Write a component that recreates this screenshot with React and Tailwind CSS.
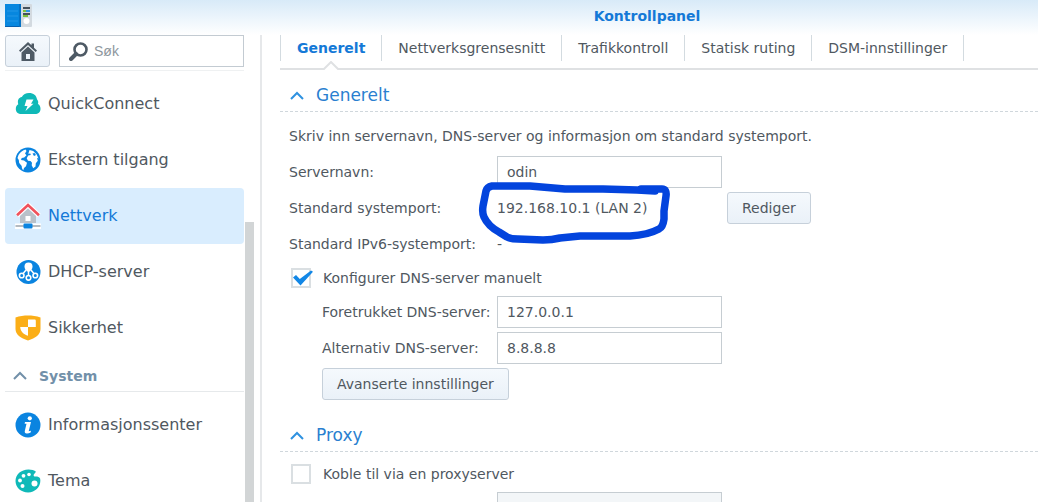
import { useState } from "react";

function CloudIcon() {
  return (
    <svg className="size-[26px] shrink-0" viewBox="0 0 26 26">
      <path d="M6.500 23C3 23 .8 21 .8 18c0-2.400 1-3.900 2.500-4.700C2.200 9.500 3.500 6.500 6.800 5.900 8.300 3.400 10.800 2 14 2c4.500 0 7.500 2.300 8 6.300 1.300 1.500 1.500 3.200 1 4.700 1.700.8 2.500 2.700 2.500 4.700 0 3.300-2.200 5.300-5.500 5.300z" fill="#0fb9b8" />
      <path d="M11.500 8.500h7l-2.500 4.200h2.500L10.500 20l2-5H9.500z" fill="#fff" />
    </svg>
  );
}

function GlobeIcon() {
  return (
    <svg className="size-[26px] shrink-0" viewBox="0 0 26 26">
      <circle cx="13" cy="13" r="12.500" fill="#0a84e0" />
      <path d="M3.500 8c1.800-3 4.200-4.800 7-5.500l1 1.500-1.500 2.500 1.500 1.700-2.300 2.300-2.500.5-.7 2 3 .5 3 2.200-1 3.500-2 1.800-.7 2.200c-1-1-1.500-2-1.600-4.200L4.200 16l-.4-3L2.500 11z" fill="#fff" />
      <path d="M14.500 3l3.700 1 3.500 3.500 1.800 4-1.500-.7.8 3-2 2.500-.3 3.200-2.300 1.700-1.500-3 .3-2.500-1.500-1.700-2.500-.3-1.300-2.500 1.500-2.700 2.600-.6-.5-1.500-2 .3.500-1.500z" fill="#fff" />
      <path d="M17.500 6.500l2-.5 1.500 2-2 1z" fill="#0a84e0" />
    </svg>
  );
}

function NetworkIcon() {
  return (
    <svg className="size-[26px] shrink-0" viewBox="0 0 26 26">
      <path d="M2 12.500L13 2l11 10.500" fill="none" stroke="#fff" strokeWidth="5" />
      <path d="M5 20v-7l8-7.500 8 7.500v7z" fill="#b9c1c9" />
      <path d="M2 12.200L13 2l11 10.200" fill="none" stroke="#f0525c" strokeWidth="2.600" />
      <rect x="10.500" y="13" width="5" height="5" fill="#fff" />
      <rect x="0" y="20.500" width="26" height="5.500" fill="#fff" />
      <rect x="0.500" y="22" width="25" height="2" fill="#b3bac1" />
      <rect x="8.500" y="20.500" width="9" height="5" rx="1" fill="#0a84e0" />
    </svg>
  );
}

function DhcpIcon() {
  return (
    <svg className="size-[26px] shrink-0" viewBox="0 0 26 26">
      <circle cx="13.500" cy="13" r="12" fill="#0a84e0" />
      <path d="M13.500 8L6.500 16.500M13.500 8v11M13.500 8l7 8.500" stroke="#fff" strokeWidth="1.500" />
      <path d="M11 8h5l-.8 4.500h-3.400z" fill="#fff" />
      <circle cx="13.500" cy="7.500" r="4" fill="#fff" />
      <g fill="#0a84e0" stroke="#fff" strokeWidth="1.600">
        <circle cx="6.700" cy="16.500" r="2.300" />
        <circle cx="20.300" cy="16.500" r="2.300" />
        <circle cx="13.500" cy="18.800" r="2.300" />
      </g>
    </svg>
  );
}

function ShieldIcon() {
  return (
    <svg className="size-[26px] shrink-0" viewBox="0 0 26 26">
      <path d="M.5 2.500C4.500 1 9 .5 13 .5s8.500.5 12.500 2V14c0 5.500-5 9-12.500 11.500C5.500 23 .5 19.500 .5 14z" fill="#fbae17" />
      <path d="M13 4.500h6.500c.8 0 1.300.5 1.300 1.300V12H13zM13 12v8.800C9 19.300 5.500 17 5.200 12z" fill="#fff" />
    </svg>
  );
}

function InfoIcon() {
  return (
    <svg className="size-[26px] shrink-0" viewBox="0 0 26 26">
      <circle cx="13" cy="13" r="12.500" fill="#0a84e0" />
      <circle cx="14.800" cy="6.300" r="2.100" fill="#fff" />
      <path d="M10 10h6l-2.300 9.300 2.300-.5-.4 1.700c-1.400.8-2.700 1.100-4 1-1.500-.2-2.100-1-1.800-2.500l1.700-7.300H9.600z" fill="#fff" />
    </svg>
  );
}

function PaletteIcon() {
  return (
    <svg className="size-[26px] shrink-0" viewBox="0 0 26 26">
      <path d="M13.500 1.500c3 0 6 .8 7.500 2.200l-2.200 2.800c-.5 1 .2 2 1.300 2 2-.2 4 .2 5 2 1.500 7-4 14-12 14C6 24.500 .5 19.500 .5 13S6 1.500 13.500 1.500z" fill="#0fb9b8" />
      <g fill="#fff">
        <circle cx="5" cy="12.500" r="1.900" />
        <circle cx="8.500" cy="7.800" r="1.900" />
        <circle cx="14" cy="6.500" r="1.800" />
        <circle cx="7.500" cy="18" r="2" />
        <circle cx="19.500" cy="15.500" r="3" />
      </g>
    </svg>
  );
}

function PanelIcon() {
  return (
    <svg className="w-[27px] h-6 shrink-0" viewBox="0 0 27 24">
      <rect x="0" y="0" width="27" height="23" rx="1" fill="#d3dae0" />
      <rect x="0" y="0" width="16" height="23" fill="#0787df" />
      <rect x="0" y="22" width="16" height="1" fill="#075fae" />
      <path d="M2 7h11M2 12h11M2 17h11" stroke="#2597e6" />
      <rect x="14" y="0" width="2" height="23" fill="#0672c4" />
      <rect x="18" y="3" width="7" height="2" fill="#46525c" />
      <rect x="18" y="6" width="7" height="2" fill="#7dbf3c" />
      <rect x="21" y="6" width="4" height="2" fill="#2e95e6" />
      <rect x="18" y="9" width="7" height="2" fill="#46525c" />
      <rect x="18" y="11" width="5" height="2" fill="#7dbf3c" />
      <circle cx="21.500" cy="17" r="3" fill="#fff" />
    </svg>
  );
}

function HomeIcon() {
  return (
    <svg className="w-[18px] h-[19px]" viewBox="0 0 18 19" fill="#4e5a65">
      <path d="M9 0l3.500 3.300V1.500H15v4.200l3 2.800-1.300 1.500L9 3 1.300 10 0 8.500z" />
      <path fillRule="evenodd" d="M9 4.500l6.500 6V19h-13v-8.500zM7 12v5h4v-5z" />
    </svg>
  );
}

function SearchIcon() {
  return (
    <svg className="size-[19px] shrink-0" viewBox="0 0 19 19" fill="none" stroke="#4e5a65">
      <circle cx="11.500" cy="7.500" r="6" strokeWidth="2.600" />
      <path d="M7 12l-5 5" strokeWidth="4" strokeLinecap="round" />
    </svg>
  );
}

function Chevron({ className }) {
  return (
    <svg className={className} viewBox="0 0 14 9" fill="none" stroke="currentColor" strokeWidth="2">
      <path d="M1 8l6-6 6 6" />
    </svg>
  );
}

// hand-drawn ring round the port address
function Marker() {
  return (
    <svg className="absolute -left-5 -top-4 w-[200px] h-[74px] pointer-events-none" viewBox="477 176 200 74" fill="none" stroke="#0344dd" strokeWidth="7.500" strokeLinecap="round" strokeLinejoin="round">
      <path d="M655 191L637 190L603 189L565 189L530 186L492 186Q487 187 486 191L483 206Q482 213 484 217Q488 226 499 232L507 237Q511 239 518 239L543 240Q552 240 560 238L580 236L630 236Q648 235 659 229Q663 227 664 219L664 211L666 196Q667 189 662 189L655 189L641 189" />
    </svg>
  );
}

const mainItems = [
  { label: "QuickConnect", icon: CloudIcon },
  { label: "Ekstern tilgang", icon: GlobeIcon },
  { label: "Nettverk", icon: NetworkIcon, active: true },
  { label: "DHCP-server", icon: DhcpIcon },
  { label: "Sikkerhet", icon: ShieldIcon },
];

const systemItems = [
  { label: "Informasjonssenter", icon: InfoIcon },
  { label: "Tema", icon: PaletteIcon },
];

const tabs = ["Generelt", "Nettverksgrensesnitt", "Trafikkontroll", "Statisk ruting", "DSM-innstillinger"];

function NavItem({ label, icon: Icon, active }) {
  return (
    <a href="#" className={`flex items-center gap-[7px] h-14 px-[10px] rounded-sm text-base ${active ? "bg-[#d9edfe] text-[#1479d7]" : "text-[#50585f]"}`}>
      <Icon />
      {label}
    </a>
  );
}

function Sidebar() {
  return (
    <aside className="flex flex-col w-[262px] shrink-0 pl-[5px] border-r-2 border-[#e6e8ea]">
      <div className="flex gap-[9px] mr-4 pb-[3px] border-b border-[#eff1f2]">
        <button aria-label="Hjem" className="flex items-center justify-center w-[45px] h-8 rounded-[3px] border border-[#c6d0da] bg-linear-to-b from-[#f5f9fd] to-[#eaf1f8]">
          <HomeIcon />
        </button>
        <label className="flex flex-1 min-w-0 items-center gap-1 h-8 px-[9px] border border-[#c3cbd2]">
          <SearchIcon />
          <input type="search" placeholder="Søk" aria-label="Søk" className="w-full min-w-0 font-['Liberation_Sans',sans-serif] text-sm placeholder:text-[#8e979e] outline-none pl-[2px]" />
        </label>
      </div>
      <div className="flex flex-1 min-h-0">
        <nav className="flex-1 min-w-0 pt-[5px]">
          {mainItems.map((item) => <NavItem key={item.label} {...item} />)}
          <button className="flex items-center gap-3 w-full h-9 pt-1 mb-[5px] pl-2 border-b border-[#e6e9eb] text-sm font-bold text-[#7290a9]">
            <Chevron className="w-[14px] h-[9px]" />
            System
          </button>
          {systemItems.map((item) => <NavItem key={item.label} {...item} />)}
        </nav>
        <div className="w-4 shrink-0 pl-px pt-[151px]">
          <div className="w-[9px] h-full bg-[#d2d5d6]" />
        </div>
      </div>
    </aside>
  );
}

function Tabs() {
  return (
    <div role="tablist" className="flex h-[35px] border-b-2 border-[#dfe1e3]">
      {tabs.map((tab, i) => (
        <div key={tab} className={`relative h-[26px] border-[#d3dbe0] ${i === 0 ? "border-x" : "border-r"}`}>
          <button role="tab" aria-selected={i === 0} className={`h-full px-4 text-sm whitespace-nowrap ${i === 0 ? "font-bold text-[#1479d7]" : "text-[#50585f]"}`}>
            {tab}
          </button>
          {i === 0 && (
            <svg className="absolute left-1/2 top-full -translate-x-1/2 w-4 h-[9px]" viewBox="0 0 16 9">
              <path d="M0 9l8-8 8 8" fill="#fff" stroke="#dfe1e3" strokeWidth="2" />
            </svg>
          )}
        </div>
      ))}
    </div>
  );
}

function SectionTitle({ children }) {
  return (
    <h2 className="border-b border-dashed border-[#d0d7dc]">
      <button className="flex items-center gap-3 h-8 pl-[10px] text-[17px] text-[#2a7fd0]">
        <Chevron className="w-[14px] h-[9px] text-[#2f92e0]" />
        {children}
      </button>
    </h2>
  );
}

function Field({ id, label, value, indent }) {
  return (
    <div className="flex items-center">
      <label htmlFor={id} className={`w-52 shrink-0 whitespace-nowrap ${indent ? "pl-[33px]" : ""}`}>{label}</label>
      <input id={id} defaultValue={value} className="w-[225px] h-8 px-[9px] border border-[#c6cdd2] bg-white outline-none" />
    </div>
  );
}

function Checkbox({ label, checked, onChange }) {
  return (
    <label className="flex items-center gap-3 h-7 pl-[2px]">
      <span className="relative size-5 shrink-0">
        <input type="checkbox" checked={checked} onChange={onChange} className="block size-5 appearance-none border-2 border-[#dadfe2] bg-white" />
        {checked && (
          <svg className="absolute left-[2px] top-0 w-5 h-5 pointer-events-none" viewBox="0 0 20 20" fill="none">
            <path d="M0 9.500l3-2.500 3.800 4L18 2.500l2 1.300L7.500 17.500z" fill="#1287e6" />
          </svg>
        )}
      </span>
      {label}
    </label>
  );
}

function Button({ children }) {
  return (
    <button className="h-8 px-[14px] rounded-[3px] border border-[#c6d0da] bg-linear-to-b from-[#f5f9fd] to-[#eaf1f8] whitespace-nowrap">
      {children}
    </button>
  );
}

export default function App() {
  const [manualDns, setManualDns] = useState(true);
  const [proxy, setProxy] = useState(false);

  return (
    <div className="flex flex-col h-screen overflow-hidden bg-white font-['DejaVu_Sans',sans-serif] text-sm text-[#50585f]">
      <header className="flex items-center h-[35px] shrink-0 pl-[5px] pb-[3px] bg-linear-to-b from-[#d8eaf8] to-white">
        <PanelIcon />
        <h1 className="flex-1 ml-56 text-center text-sm font-bold text-[#1479d7]">Kontrollpanel</h1>
      </header>
      <div className="flex flex-1 min-h-0">
        <Sidebar />
        <main className="flex-1 min-w-0 pl-[18px]">
          <Tabs />
          <section className="pt-[9px]">
            <SectionTitle>Generelt</SectionTitle>
            <div className="flex flex-col gap-1 pl-[9px] pt-[14px]">
              <p className="leading-5 mb-[6px]">Skriv inn servernavn, DNS-server og informasjon om standard systemport.</p>
              <Field id="servername" label="Servernavn:" value="odin" />
              <div className="flex items-center h-8">
                <span className="w-52 shrink-0">Standard systemport:</span>
                <div className="relative flex items-center w-[230px] h-8">
                  192.168.10.1 (LAN 2)
                  <Marker />
                </div>
                <Button>Rediger</Button>
              </div>
              <div className="flex items-center h-8">
                <span className="w-52 shrink-0">Standard IPv6-systemport:</span>
                -
              </div>
              <Checkbox label="Konfigurer DNS-server manuelt" checked={manualDns} onChange={() => setManualDns(!manualDns)} />
              <Field id="dns1" label="Foretrukket DNS-server:" value="127.0.0.1" indent />
              <Field id="dns2" label="Alternativ DNS-server:" value="8.8.8.8" indent />
              <div className="pl-[33px]">
                <Button>Avanserte innstillinger</Button>
              </div>
            </div>
          </section>
          <section className="pt-[19px]">
            <SectionTitle>Proxy</SectionTitle>
            <div className="flex flex-col gap-1 pl-[9px] pt-2">
              <Checkbox label="Koble til via en proxyserver" checked={proxy} onChange={() => setProxy(!proxy)} />
              <div className="flex">
                <span className="w-52 shrink-0" />
                <input aria-label="Adresse" disabled className="w-[225px] h-8 border border-[#c6cdd2] bg-[#f3f6f8]" />
              </div>
            </div>
          </section>
        </main>
      </div>
    </div>
  );
}
